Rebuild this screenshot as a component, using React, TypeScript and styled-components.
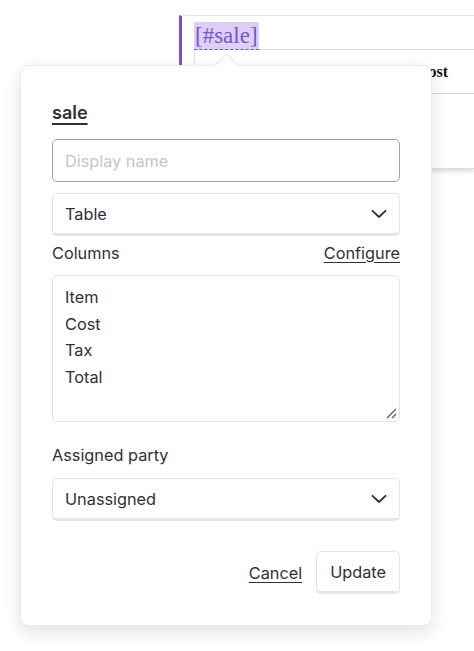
import React from "react";
import styled, { createGlobalStyle } from "styled-components";

const Global = createGlobalStyle`
  html, body { margin: 0; padding: 0; background: #ffffff; }
  body { font-family: "Inter", "Open Sans", sans-serif; color: #2e3039; }
  * { box-sizing: border-box; }
`;

const Page = styled.div`
  position: relative;
  width: 474px;
  height: 651px;
  overflow: hidden;
`;

const DocBlock = styled.div`
  margin: 15px 0 0 179px;
  border-left: 3px solid #7e4fd6;
  border-top: 1px solid #e8e8ea;
  padding: 6px 0 0 12px;
  height: 175px;
`;

const Token = styled.span`
  display: inline-block;
  font-family: "Liberation Serif", serif;
  font-size: 23px;
  line-height: 27px;
  color: #7a55cc;
  background: #dccff8;
  border-bottom: 1px dashed #7a55cc;
  padding: 0 1px;
`;

const Table = styled.div`
  margin-top: -1px;
  border-top: 1px solid #d9d9d9;
  border-left: 1px solid #e2e2e2;
  height: 120px;
  display: flex;
  flex-direction: column;
`;

const HeaderRow = styled.div`
  height: 44px;
  border-bottom: 1px solid #dcdcdc;
  display: flex;
  align-items: center;
  padding-left: 222px;
  font-family: "Liberation Serif", serif;
  font-weight: 700;
  font-size: 16px;
  color: #111;
`;

const BodyRow = styled.div`
  flex: 1;
  border-bottom: 1px solid #dcdcdc;
  box-shadow: 0 3px 4px rgba(0, 0, 0, 0.12);
`;

const Popover = styled.div`
  position: absolute;
  left: 20px;
  top: 65px;
  width: 412px;
  height: 561px;
  background: #ffffff;
  border: 1px solid #ececee;
  border-radius: 9px;
  box-shadow: 0 6px 18px rgba(20, 20, 40, 0.13);
  padding: 34px 31px 0 31px;
  display: flex;
  flex-direction: column;

  &::before {
    content: "";
    position: absolute;
    top: -9px;
    left: 197px;
    width: 16px;
    height: 16px;
    background: #ffffff;
    border-left: 1px solid #e4e4e8;
    border-top: 1px solid #e4e4e8;
    transform: rotate(45deg);
  }
`;

const Title = styled.a`
  font-size: 18px;
  font-weight: 600;
  line-height: 26px;
  color: #2e3039;
  text-decoration: underline;
  text-underline-offset: 4px;
  text-decoration-thickness: 2px;
  align-self: flex-start;
`;

const TextInput = styled.input`
  margin-top: 13px;
  height: 43px;
  width: 100%;
  border: 1px solid #9ea3ab;
  border-radius: 5px;
  padding: 0 12px;
  font-family: "Inter", "Open Sans", sans-serif;
  font-size: 16.3px;
  color: #2e3039;
  outline: none;
  &::placeholder { color: #c3c6cc; }
`;

const SelectBox = styled.div<{ $mt: number }>`
  margin-top: ${(p) => p.$mt}px;
  height: 43px;
  width: 100%;
  border: 1px solid #e3e5e9;
  border-bottom: 3px solid #e3e5ea;
  border-radius: 5px;
  padding: 0 12px 0 12px;
  display: flex;
  align-items: center;
  justify-content: space-between;
  font-size: 16.3px;
  color: #2e3039;
`;

const Chevron = () => (
  <svg width="16" height="10" viewBox="0 0 16 10" fill="none">
    <path d="M1.5 1.8 L8 8 L14.5 1.8" stroke="#2e3039" strokeWidth="1.8" strokeLinecap="round" strokeLinejoin="round" />
  </svg>
);

const LabelRow = styled.div<{ $mt: number }>`
  margin-top: ${(p) => p.$mt}px;
  display: flex;
  justify-content: space-between;
  align-items: center;
  height: 20px;
  font-size: 16.3px;
  color: #2e3039;
`;

const LinkText = styled.a`
  color: #2e3039;
  text-decoration: underline;
  text-underline-offset: 3px;
  font-size: 16.3px;
`;

const TextArea = styled.div`
  position: relative;
  margin-top: 12px;
  height: 147px;
  width: 100%;
  border: 1px solid #e2e4e8;
  border-radius: 5px;
  padding: 8px 12px;
  font-size: 16.3px;
  line-height: 26.5px;
  color: #2e3039;
`;

const Resize = styled.svg`
  position: absolute;
  right: 2px;
  bottom: 2px;
`;

const Footer = styled.div`
  margin-top: 30px;
  display: flex;
  justify-content: flex-end;
  align-items: center;
  gap: 14px;
`;

const UpdateButton = styled.button`
  height: 43px;
  padding: 0 13px;
  background: #ffffff;
  border: 1px solid #e3e5e9;
  border-bottom: 3px solid #e3e5ea;
  border-radius: 5px;
  font-family: "Inter", "Open Sans", sans-serif;
  font-size: 16.3px;
  color: #2e3039;
`;

export default function App() {
  return (
    <Page>
      <Global />
      <DocBlock>
        <Token>[#sale]</Token>
        <Table>
          <HeaderRow>Cost</HeaderRow>
          <BodyRow />
        </Table>
      </DocBlock>
      <Popover>
        <Title>sale</Title>
        <TextInput placeholder="Display name" />
        <SelectBox $mt={11}>
          <span>Table</span>
          <Chevron />
        </SelectBox>
        <LabelRow $mt={7}>
          <span>Columns</span>
          <LinkText>Configure</LinkText>
        </LabelRow>
        <TextArea>
          <div>Item</div>
          <div>Cost</div>
          <div>Tax</div>
          <div>Total</div>
          <Resize width="12" height="12" viewBox="0 0 12 12">
            <path d="M2 11 L11 2 M7 11 L11 7" stroke="#555" strokeWidth="1.1" />
          </Resize>
        </TextArea>
        <LabelRow $mt={23}>
          <span>Assigned party</span>
        </LabelRow>
        <SelectBox $mt={13}>
          <span>Unassigned</span>
          <Chevron />
        </SelectBox>
        <Footer>
          <LinkText>Cancel</LinkText>
          <UpdateButton>Update</UpdateButton>
        </Footer>
      </Popover>
    </Page>
  );
}
